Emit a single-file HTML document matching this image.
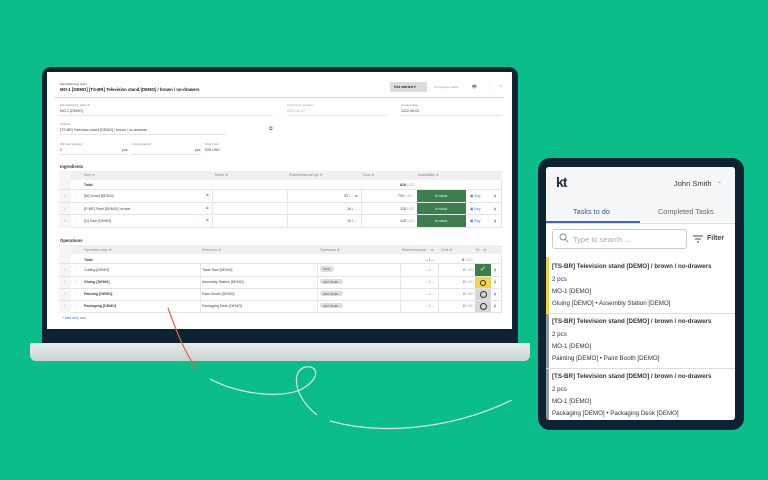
<!DOCTYPE html><html><head><style>
*{margin:0;padding:0;box-sizing:border-box}
body{width:768px;height:480px;background:#0abd89;position:relative;overflow:hidden;font-family:"Liberation Sans",sans-serif;color:#333}
.a{position:absolute}
.t{position:absolute;font-size:3.6px;white-space:nowrap;color:#444}
.l{position:absolute;height:1px;background:#e2e4e6}
.tx{position:absolute;font-size:6.2px;white-space:nowrap;color:#333}
</style></head><body>
<!-- laptop -->
<div class="a" style="left:42px;top:67px;width:476px;height:280px;background:#0d2233;border-radius:9px 9px 0 0"></div>
<div class="a" style="left:47px;top:72px;width:465px;height:257px;background:#fff"></div>
<div class="a" style="left:30px;top:343px;width:500px;height:18px;background:linear-gradient(#e6ecea,#c9d3d0);border-radius:2px 0 6px 6px"></div>
<!-- screen content -->
<div class="t" style="left:60px;top:82px;font-size:3px">Manufacturing order</div>
<div class="t" style="left:60px;top:87px;font-size:4.3px;font-weight:bold;color:#222">MO-1 [DEMO] [TS-BR] Television stand [DEMO] / brown / no-drawers</div>
<div class="a" style="left:390px;top:82px;width:37px;height:10px;background:#dcdcdc"></div>
<div class="t" style="left:394px;top:85px;font-weight:bold;color:#333">Not started ▾</div>
<div class="t" style="left:434px;top:85px;font-size:3px;color:#999">All changes saved</div>
<div class="t" style="left:472px;top:84px;font-size:5px;color:#777">🖶</div>
<div class="t" style="left:487px;top:84px;font-size:5px;color:#999">⋮</div>
<div class="t" style="left:499px;top:84px;font-size:5px;color:#aaa">×</div>
<div class="l" style="left:55px;top:97px;width:449px;background:#c9d8ec"></div>
<div class="t" style="left:60px;top:103px;font-size:3px;color:#888">Manufacturing order #</div>
<div class="t" style="left:60px;top:109px">MO-1 [DEMO]</div>
<div class="l" style="left:59px;top:115px;width:214px"></div>
<div class="t" style="left:287px;top:103px;font-size:3px;color:#aaa">Production deadline</div>
<div class="t" style="left:287px;top:109px;color:#bbb">2022-06-20</div>
<div class="l" style="left:287px;top:115px;width:100px"></div>
<div class="t" style="left:401px;top:103px;font-size:3px;color:#888">Created date</div>
<div class="t" style="left:401px;top:109px">2022-05-02</div>
<div class="l" style="left:401px;top:115px;width:101px"></div>
<div class="t" style="left:60px;top:122px;font-size:3px;color:#888">Product</div>
<div class="t" style="left:60px;top:128px">[TS-BR] Television stand [DEMO] / brown / no-drawers</div>
<div class="l" style="left:59px;top:134px;width:167px"></div>
<div class="t" style="left:269px;top:126px;font-size:5px;color:#3b6fd0">⧉</div>
<div class="t" style="left:60px;top:142px;font-size:3px;color:#888">Planned quantity</div>
<div class="t" style="left:60px;top:148px">2</div><div class="t" style="left:122px;top:148px">pcs</div>
<div class="l" style="left:59px;top:154px;width:69px"></div>
<div class="t" style="left:132px;top:142px;font-size:3px;color:#888">Actual quantity</div>
<div class="t" style="left:195px;top:148px">pcs</div>
<div class="l" style="left:132px;top:154px;width:69px"></div>
<div class="t" style="left:205px;top:142px;font-size:3px;color:#888">Total Cost</div>
<div class="t" style="left:205px;top:148px">828 USD</div>
<div class="t" style="left:60px;top:164px;font-size:4.3px;font-weight:bold;color:#333">Ingredients</div>
<!-- ingredients table -->
<div class="a" style="left:59px;top:171px;width:443px;height:57px;border:1px solid #e4e4e4;background:#fff"></div>
<div class="a" style="left:59px;top:171px;width:443px;height:9px;background:#eef0f1"></div>
<div class="a" style="left:59px;top:171px;width:12px;height:57px;background:#f4f5f6"></div>
<div class="t" style="left:84px;top:173px;color:#888">Item ✲</div>
<div class="t" style="left:215px;top:173px;color:#888">Notes ✲</div>
<div class="t" style="left:289px;top:173px;color:#888">Planned/actual qty ✲</div>
<div class="t" style="left:363px;top:173px;color:#888">Cost ✲</div>
<div class="t" style="left:418px;top:173px;color:#888">Availability ✲</div>
<div class="t" style="left:84px;top:183px;font-weight:bold">Total:</div>
<div class="t" style="left:400px;top:183px;font-weight:bold">828 <span style="color:#aaa;font-weight:normal">USD</span></div>
<div class="l" style="left:59px;top:189px;width:443px"></div>
<div class="l" style="left:59px;top:202px;width:443px"></div>
<div class="l" style="left:59px;top:214px;width:443px"></div>
<div class="a" style="left:212px;top:189px;width:1px;height:38px;background:#e6e6e6"></div>
<div class="a" style="left:287px;top:189px;width:1px;height:38px;background:#e6e6e6"></div>
<div class="a" style="left:361px;top:189px;width:1px;height:38px;background:#e6e6e6"></div>
<div class="t" style="left:64px;top:194px;color:#bbb">1</div><div class="t" style="left:75px;top:194px;color:#aaa">⋮</div><div class="t" style="left:84px;top:194px">[W] Wood [DEMO]</div><div class="t" style="left:206px;top:193px;color:#3b6fd0">⧉</div><div class="t" style="left:344px;top:194px">20 / ... m</div><div class="t" style="left:398px;top:194px">700 <span style="color:#aaa">USD</span></div>
<div class="t" style="left:64px;top:207px;color:#bbb">2</div><div class="t" style="left:75px;top:207px;color:#aaa">⋮</div><div class="t" style="left:84px;top:207px">[P-BR] Paint [DEMO] / brown</div><div class="t" style="left:206px;top:206px;color:#3b6fd0">⧉</div><div class="t" style="left:347px;top:207px">16 / ...</div><div class="t" style="left:400px;top:207px">128 <span style="color:#aaa">USD</span></div>
<div class="t" style="left:64px;top:219px;color:#bbb">3</div><div class="t" style="left:75px;top:219px;color:#aaa">⋮</div><div class="t" style="left:84px;top:219px">[G] Glue [DEMO]</div><div class="t" style="left:206px;top:218px;color:#3b6fd0">⧉</div><div class="t" style="left:347px;top:219px">16 / ...</div><div class="t" style="left:400px;top:219px">128 <span style="color:#aaa">USD</span></div>
<div class="a" style="left:417px;top:190px;width:49px;height:12px;background:#3e7d4e"></div>
<div class="a" style="left:417px;top:203px;width:49px;height:11px;background:#3e7d4e"></div>
<div class="a" style="left:417px;top:215px;width:49px;height:12px;background:#3e7d4e"></div>
<div class="t" style="left:435px;top:194px;color:#dfe">In stock</div><div class="t" style="left:435px;top:207px;color:#dfe">In stock</div><div class="t" style="left:435px;top:219px;color:#dfe">In stock</div>
<div class="t" style="left:470px;top:194px;color:#3b6fd0">▣ Buy</div><div class="t" style="left:470px;top:207px;color:#3b6fd0">▣ Buy</div><div class="t" style="left:470px;top:219px;color:#3b6fd0">▣ Buy</div>
<div class="t" style="left:494px;top:194px;color:#888">▮</div><div class="t" style="left:494px;top:207px;color:#888">▮</div><div class="t" style="left:494px;top:219px;color:#888">▮</div>
<div class="t" style="left:60px;top:238px;font-size:4.3px;font-weight:bold;color:#333">Operations</div>
<!-- ops table -->
<div class="a" style="left:59px;top:245px;width:443px;height:68px;border:1px solid #e4e4e4;background:#fff"></div>
<div class="a" style="left:59px;top:245px;width:443px;height:9px;background:#eef0f1"></div>
<div class="a" style="left:59px;top:245px;width:12px;height:68px;background:#f4f5f6"></div>
<div class="t" style="left:84px;top:248px;color:#888">Operation step ✲</div>
<div class="t" style="left:202px;top:248px;color:#888">Resource ✲</div>
<div class="t" style="left:320px;top:248px;color:#888">Operators ✲</div>
<div class="t" style="left:402px;top:248px;color:#888">Planned/actual ... ✲</div>
<div class="t" style="left:441px;top:248px;color:#888">Cost ✲</div>
<div class="t" style="left:476px;top:248px;color:#888">St... ✲</div>
<div class="t" style="left:84px;top:258px;font-weight:bold">Total:</div>
<div class="t" style="left:425px;top:258px;font-weight:bold">... / ...</div><div class="t" style="left:462px;top:258px;font-weight:bold">0 <span style="color:#aaa;font-weight:normal">USD</span></div>
<div class="l" style="left:59px;top:263px;width:443px"></div>
<div class="l" style="left:59px;top:276px;width:443px"></div>
<div class="l" style="left:59px;top:288px;width:443px"></div>
<div class="l" style="left:59px;top:300px;width:443px"></div>
<div class="a" style="left:200px;top:263px;width:1px;height:49px;background:#e6e6e6"></div>
<div class="a" style="left:317px;top:263px;width:1px;height:49px;background:#e6e6e6"></div>
<div class="a" style="left:400px;top:263px;width:1px;height:49px;background:#e6e6e6"></div>
<div class="a" style="left:438px;top:263px;width:1px;height:49px;background:#e6e6e6"></div>
<div class="t" style="left:64px;top:268px;color:#bbb">1</div><div class="t" style="left:75px;top:268px;color:#aaa">⋮</div><div class="t" style="left:84px;top:268px">Cutting [DEMO]</div><div class="t" style="left:202px;top:268px">Table Saw [DEMO]</div>
<div class="t" style="left:64px;top:280px;color:#bbb">2</div><div class="t" style="left:75px;top:280px;color:#aaa">⋮</div><div class="t" style="left:84px;top:280px;font-weight:bold">Gluing [DEMO]</div><div class="t" style="left:202px;top:280px">Assembly Station [DEMO]</div>
<div class="t" style="left:64px;top:292px;color:#bbb">3</div><div class="t" style="left:75px;top:292px;color:#aaa">⋮</div><div class="t" style="left:84px;top:292px;font-weight:bold">Painting [DEMO]</div><div class="t" style="left:202px;top:292px">Paint Booth [DEMO]</div>
<div class="t" style="left:64px;top:304px;color:#bbb">4</div><div class="t" style="left:75px;top:304px;color:#aaa">⋮</div><div class="t" style="left:84px;top:304px;font-weight:bold">Packaging [DEMO]</div><div class="t" style="left:202px;top:304px">Packaging Desk [DEMO]</div>
<div class="a" style="left:320px;top:266px;width:14px;height:6px;background:#ddd;border-radius:3px"></div><div class="t" style="left:323px;top:267px;font-size:3px">Chris</div>
<div class="a" style="left:320px;top:279px;width:23px;height:5px;background:#ddd;border-radius:3px"></div><div class="t" style="left:323px;top:279.5px;font-size:3px">John Smith</div>
<div class="a" style="left:320px;top:291px;width:23px;height:5px;background:#ddd;border-radius:3px"></div><div class="t" style="left:323px;top:291.5px;font-size:3px">John Smith</div>
<div class="a" style="left:320px;top:303px;width:23px;height:5px;background:#ddd;border-radius:3px"></div><div class="t" style="left:323px;top:303.5px;font-size:3px">John Smith</div>
<div class="t" style="left:425px;top:268px">... / ...</div><div class="t" style="left:463px;top:268px">0 <span style="color:#aaa">USD</span></div>
<div class="t" style="left:425px;top:280px">... / ...</div><div class="t" style="left:463px;top:280px">0 <span style="color:#aaa">USD</span></div>
<div class="t" style="left:425px;top:292px">... / ...</div><div class="t" style="left:463px;top:292px">0 <span style="color:#aaa">USD</span></div>
<div class="t" style="left:425px;top:304px">... / ...</div><div class="t" style="left:463px;top:304px">0 <span style="color:#aaa">USD</span></div>
<div class="a" style="left:475px;top:264px;width:16px;height:12px;background:#3e7d4e;color:#fff;font-size:7px;text-align:center;line-height:12px">✓</div>
<div class="a" style="left:475px;top:277px;width:16px;height:11px;background:#f5d34c"><div class="a" style="left:5px;top:2.5px;width:6px;height:6px;border:1px solid #333;border-radius:50%"></div></div>
<div class="a" style="left:475px;top:289px;width:16px;height:11px;background:#d6d6d6"><div class="a" style="left:4.5px;top:2px;width:7px;height:7px;border:1.2px solid #333;border-radius:50%"></div></div>
<div class="a" style="left:475px;top:301px;width:16px;height:11px;background:#d6d6d6"><div class="a" style="left:4.5px;top:2px;width:7px;height:7px;border:1.2px solid #333;border-radius:50%"></div></div>
<div class="t" style="left:494px;top:268px;color:#888">▮</div><div class="t" style="left:494px;top:280px;color:#888">▮</div><div class="t" style="left:494px;top:292px;color:#888">▮</div><div class="t" style="left:494px;top:304px;color:#888">▮</div>
<div class="t" style="left:62px;top:316px;color:#3b6fd0">+ Add new row</div>
<!-- curves -->
<svg class="a" style="left:0;top:0" width="768" height="480">
<path d="M168 308 C176 330 184 352 197 369" stroke="#e8604c" stroke-width="1.2" fill="none"/>
<path d="M210 379 C240 395 280 398 300 390 C320 380 320 365 305 367 C290 372 295 398 317 415" stroke="#dde6e2" stroke-width="1.2" fill="none"/>
<path d="M330 421 C380 435 450 430 512 400" stroke="#dde6e2" stroke-width="1.2" fill="none"/>
</svg>
<!-- tablet -->
<div class="a" style="left:538px;top:158px;width:206px;height:272px;background:#0d2233;border-radius:12px"></div>
<div class="a" style="left:546px;top:167px;width:189px;height:253px;background:#fff;border-radius:3px;overflow:hidden">
 <div class="a" style="left:0;top:0;width:189px;height:55px;background:#f6f7f8"></div>
 <div class="a" style="left:10px;top:7px;font-size:14px;font-weight:bold;color:#1d2a3a;letter-spacing:-1px">kt</div>
 <div class="tx" style="left:128px;top:12px;font-size:7.5px">John Smith</div>
 <div class="tx" style="left:171px;top:11px;color:#888">⌄</div>
 <div class="tx" style="left:27px;top:40px;font-size:7.3px;color:#2e58a8">Tasks to do</div>
 <div class="tx" style="left:112px;top:40px;font-size:7.3px;color:#666">Completed Tasks</div>
 <div class="a" style="left:0;top:54px;width:94px;height:2px;background:#3a66c2"></div>
 <div class="a" style="left:0;top:56px;width:189px;height:1px;background:#ddd"></div>
 <div class="a" style="left:6px;top:62px;width:135px;height:20px;border:1px solid #ccc;border-radius:3px;background:#fff"></div>
 <svg class="a" style="left:13px;top:66px" width="10" height="10"><circle cx="4" cy="4" r="3" stroke="#888" stroke-width="1" fill="none"/><path d="M6.2 6.2 L9 9" stroke="#888" stroke-width="1"/></svg>
 <div class="tx" style="left:27px;top:68px;font-size:7.5px;color:#aaa">Type to search ...</div>
 <svg class="a" style="left:147px;top:68px" width="11" height="9"><path d="M0 1H10M2 4H8M4 7H6" stroke="#444" stroke-width="1"/></svg>
 <div class="tx" style="left:161px;top:68px;font-size:7px;font-weight:bold;color:#444">Filter</div>
 <div class="a" style="left:0;top:90px;width:189px;height:56px;background:#fff"></div>
 <div class="a" style="left:0;top:90px;width:3px;height:56px;background:#f3cf45"></div>
 <div class="a" style="left:0;top:146px;width:189px;height:1px;background:#ddd"></div>
 <div class="a" style="left:0;top:147px;width:3px;height:54px;background:#999"></div>
 <div class="a" style="left:0;top:201px;width:189px;height:1px;background:#ddd"></div>
 <div class="a" style="left:0;top:202px;width:3px;height:51px;background:#999"></div>
 <div class="tx" style="left:6px;top:96px;font-weight:bold">[TS-BR] Television stand [DEMO] / brown / no-drawers</div>
 <div class="tx" style="left:6px;top:109px">2 pcs</div><div class="tx" style="left:6px;top:121px">MO-1 [DEMO]</div><div class="tx" style="left:6px;top:133px">Gluing [DEMO] • Assembly Station [DEMO]</div>
 <div class="tx" style="left:6px;top:151px;font-weight:bold">[TS-BR] Television stand [DEMO] / brown / no-drawers</div>
 <div class="tx" style="left:6px;top:164px">2 pcs</div><div class="tx" style="left:6px;top:176px">MO-1 [DEMO]</div><div class="tx" style="left:6px;top:188px">Painting [DEMO] • Paint Booth [DEMO]</div>
 <div class="tx" style="left:6px;top:206px;font-weight:bold">[TS-BR] Television stand [DEMO] / brown / no-drawers</div>
 <div class="tx" style="left:6px;top:219px">2 pcs</div><div class="tx" style="left:6px;top:231px">MO-1 [DEMO]</div><div class="tx" style="left:6px;top:243px">Packaging [DEMO] • Packaging Desk [DEMO]</div>
</div>
</body></html>
